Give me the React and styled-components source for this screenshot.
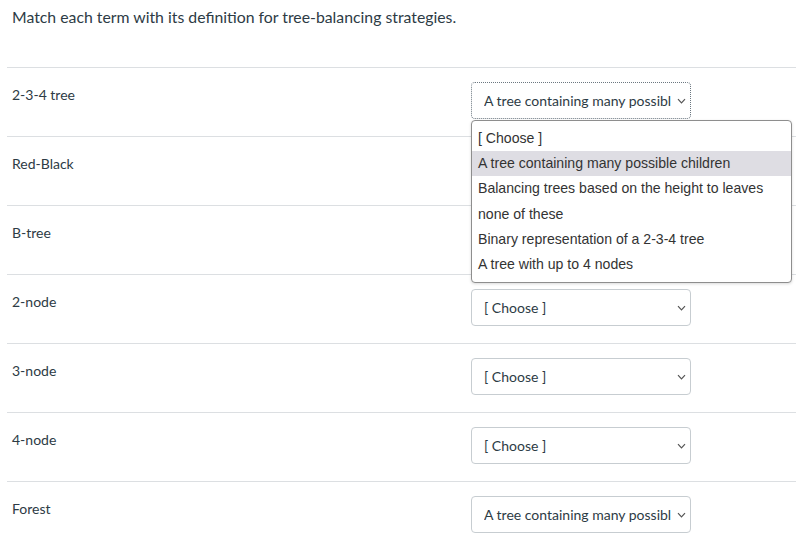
import React from 'react';
import styled, { createGlobalStyle } from 'styled-components';

const GlobalStyle = createGlobalStyle`
  body {
    margin: 0;
    background: #fff;
    font-family: Lato, "Noto Sans", sans-serif;
    color: #2d3b45;
  }
`;

const Page = styled.div`
  width: 796px;
  padding: 5px 0 0 7px;
  box-sizing: border-box;
`;

const Prompt = styled.p`
  margin: 0 0 38px 5px;
  font-size: 15.8px;
  line-height: 24px;
  color: #2d3b45;
`;

const Rows = styled.div`
  display: flex;
  flex-direction: column;
`;

const Row = styled.div`
  display: grid;
  grid-template-columns: 464px 1fr;
  height: 69px;
  box-sizing: border-box;
  border-top: 1px solid #dcdfe2;
`;

const Term = styled.div`
  padding: 17px 0 0 5px;
  font-size: 14px;
  line-height: 20px;
`;

const Cell = styled.div`
  position: relative;
  padding-top: 14px;
`;

const SelectBox = styled.div`
  width: 220px;
  height: 37px;
  box-sizing: border-box;
  display: flex;
  align-items: center;
  padding: 0 4px 0 12px;
  border: 1px ${({ $focused }) => ($focused ? 'dotted #6b7780' : 'solid #c7cdd1')};
  border-radius: 4px;
  background: #fff;
  font-size: 14px;
  color: #2d3b45;
`;

const Value = styled.span`
  flex: 1;
  overflow: hidden;
  white-space: nowrap;
  margin-right: 6px;
`;

const Chevron = styled.svg`
  flex: none;
  width: 9px;
  height: 6px;
`;

const Menu = styled.ul`
  position: absolute;
  top: 52px;
  left: 0;
  width: 321px;
  margin: 0;
  padding: 5px 0 5px;
  list-style: none;
  box-sizing: border-box;
  background: #fff;
  border: 1px solid #8e8e8e;
  border-radius: 4px;
  box-shadow: 0 1px 3px rgba(0, 0, 0, 0.15);
  font-family: "Liberation Sans", Arial, sans-serif;
  font-size: 14.1px;
  color: #333;
  z-index: 2;
`;

const Option = styled.li`
  height: 25.2px;
  line-height: 25px;
  padding-left: 6px;
  background: ${({ $hover }) => ($hover ? '#dedde3' : 'transparent')};
  white-space: nowrap;
`;

const options = [
  '[ Choose ]',
  'A tree containing many possible children',
  'Balancing trees based on the height to leaves',
  'none of these',
  'Binary representation of a 2-3-4 tree',
  'A tree with up to 4 nodes',
];

const rows = [
  { term: '2-3-4 tree', value: options[1], open: true },
  { term: 'Red-Black', value: options[0] },
  { term: 'B-tree', value: options[0] },
  { term: '2-node', value: options[0] },
  { term: '3-node', value: options[0] },
  { term: '4-node', value: options[0] },
  { term: 'Forest', value: options[1] },
];

const Select = ({ value, open }) => (
  <>
    <SelectBox $focused={open}>
      <Value>{value}</Value>
      <Chevron viewBox="0 0 9 6">
        <path d="M1 1.2 L4.5 4.8 L8 1.2" fill="none" stroke="#555" strokeWidth="1.2" />
      </Chevron>
    </SelectBox>
    {open && (
      <Menu>
        {options.map((o) => (
          <Option key={o} $hover={o === value}>
            {o}
          </Option>
        ))}
      </Menu>
    )}
  </>
);

export default function App() {
  return (
    <Page>
      <GlobalStyle />
      <Prompt>Match each term with its definition for tree-balancing strategies.</Prompt>
      <Rows>
        {rows.map((r) => (
          <Row key={r.term}>
            <Term>{r.term}</Term>
            <Cell>
              <Select value={r.value} open={r.open} />
            </Cell>
          </Row>
        ))}
      </Rows>
    </Page>
  );
}
